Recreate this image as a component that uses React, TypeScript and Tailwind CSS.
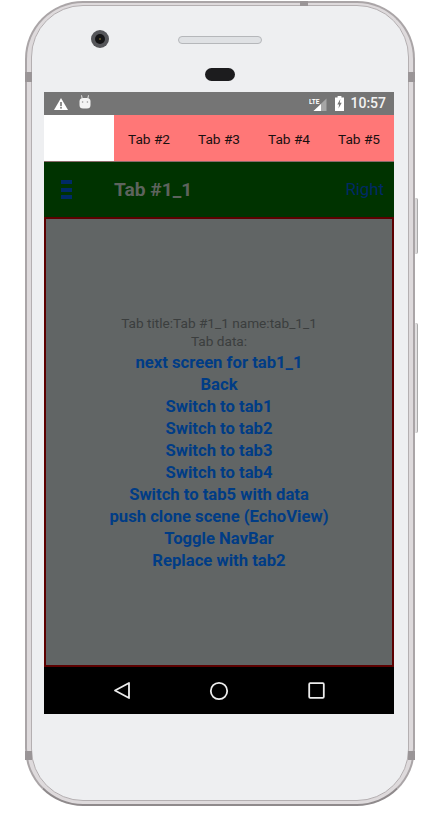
const tabs = ['Tab #2', 'Tab #3', 'Tab #4', 'Tab #5'];
const links = [
  'next screen for tab1_1',
  'Back',
  'Switch to tab1',
  'Switch to tab2',
  'Switch to tab3',
  'Switch to tab4',
  'Switch to tab5 with data',
  'push clone scene (EchoView)',
  'Toggle NavBar',
  'Replace with tab2',
];

function StatusIcons() {
  return (
    <div className="h-[23px] bg-[#757575] flex items-center pl-[10px] pr-[8px] text-white">
      <svg width="14" height="12" viewBox="0 0 14 12">
        <path d="M7 0 14 12H0Z" fill="#fff" />
        <rect x="6.2" y="4" width="1.6" height="4.2" fill="#757575" />
        <rect x="6.2" y="9" width="1.6" height="1.6" fill="#757575" />
      </svg>
      <svg width="12" height="14" viewBox="0 0 12 14" className="ml-[11px] mb-[3px]">
        <path d="M2.5 0.3 3.2 3.5M9.5 0.3 8.8 3.5" stroke="#e6e6e6" strokeWidth="1" />
        <rect x="0.5" y="3" width="11" height="10.5" rx="3.5" fill="#f4f4f4" />
        <circle cx="3.6" cy="7" r="0.8" fill="#999" />
        <circle cx="8.4" cy="7" r="0.8" fill="#999" />
      </svg>
      <div className="flex-1" />
      <svg width="18" height="15" viewBox="0 0 18 15" className="mt-[1px]">
        <path d="M17.5 1.5V14H4.5Z" fill="#a6a6a6" />
        <path d="M12 7V14H4.5Z" fill="#fff" />
        <text x="0" y="6.5" fontSize="6.5" fontFamily="Roboto, sans-serif" fontWeight="700" fill="#fff">LTE</text>
      </svg>
      <svg width="9" height="15" viewBox="0 0 9 15" className="ml-[8px]">
        <path d="M2.6 0H6.4V1.5H9V15H0V1.5H2.6Z" fill="#fff" />
        <path d="M5.3 3 2.3 8.6H4.1L3.5 12.5 6.7 6.8H4.8Z" fill="#757575" />
      </svg>
      <span className="ml-[6px] text-[14px] font-medium text-[#f2f2f2]">10:57</span>
    </div>
  );
}

function BottomNav() {
  return (
    <div className="h-[47px] bg-black flex items-center pl-[69px]">
      <svg width="18" height="19" viewBox="0 0 18 19">
        <path d="M16 2 2 9.5 16 17Z" fill="none" stroke="#ececec" strokeWidth="1.8" strokeLinejoin="round" />
      </svg>
      <svg width="20" height="20" viewBox="0 0 20 20" className="ml-[78px]">
        <circle cx="10" cy="10" r="8.2" fill="none" stroke="#ececec" strokeWidth="1.8" />
      </svg>
      <svg width="17" height="17" viewBox="0 0 17 17" className="ml-[79px]">
        <rect x="1.2" y="1.2" width="14.6" height="14.6" rx="1" fill="none" stroke="#ececec" strokeWidth="1.8" />
      </svg>
    </div>
  );
}

export default function App() {
  return (
    <div className="w-[442px] h-[818px] bg-white pl-[25px] pt-[1px] font-['Roboto',sans-serif]">
      <div className="relative w-[390px] h-[805px] rounded-[58px] border-[2px] border-[#aaa5a7] border-b-[#8f8a8c] bg-[#dedadc] pt-[2px] px-[4px] pb-[3px]">
        {/* side buttons */}
        <div className="absolute right-[-5px] top-[195px] w-[3px] h-[56px] rounded-r-[2px] bg-[#dcdadb] border-r border-[#aaa]" />
        <div className="absolute right-[-5px] top-[320px] w-[3px] h-[110px] rounded-r-[2px] bg-[#e2e0e1] border-r border-[#aaa]" />

        {/* antenna bands */}
        <div className="absolute left-[-2px] top-[69px] w-[7px] h-[10px] bg-[#9a9597]" />
        <div className="absolute right-[-2px] top-[69px] w-[7px] h-[10px] bg-[#9a9597]" />
        <div className="absolute left-[-2px] bottom-[44px] w-[7px] h-[9px] bg-[#9a9597]" />
        <div className="absolute right-[-2px] bottom-[44px] w-[7px] h-[9px] bg-[#9a9597]" />
        <div className="absolute left-[273px] top-[-2px] w-[8px] h-[5px] bg-[#9a9597]" />

        <div className="h-full rounded-[52px] border border-[#b4afb1] bg-[#eeeff1] px-[12px]">
          {/* top bezel */}
          <div className="relative h-[86px]">
            <div className="absolute left-[47px] top-[24px] w-[18px] h-[18px] rounded-full bg-[#55565a] flex items-center justify-center">
              <div className="w-[10px] h-[10px] rounded-full bg-[#141416] flex items-center justify-center">
                <div className="w-[2px] h-[2px] rounded-full bg-[#6b5f30]" />
              </div>
            </div>
            <div className="absolute left-[134px] top-[30px] w-[84px] h-[8px] rounded-full bg-[#dfe1e4] border border-[#b5b7ba]" />
            <div className="absolute left-[161px] top-[62px] w-[30px] h-[13px] rounded-full bg-[#1c1c1e]" />
          </div>

          <div className="w-[350px]">
            <StatusIcons />

            <div className="h-[47px] flex border-b border-[#8a6a6a]">
              <div className="w-[70px] bg-white" />
              {tabs.map((t) => (
                <div key={t} className="w-[70px] bg-[#ff7777] flex items-center justify-center pt-[2px] text-[13.7px] text-[#1a1010]">{t}</div>
              ))}
            </div>

            <div className="h-[55px] bg-[#003300] flex items-center pl-[17px] pr-[10px]">
              <div className="w-[11px] flex flex-col gap-[3.5px]">
                <div className="h-[4px] bg-[#002a66]" />
                <div className="h-[4px] bg-[#002a66]" />
                <div className="h-[4px] bg-[#002a66]" />
              </div>
              <div className="ml-[42px] pt-[1px] text-[19.2px] font-bold text-[#5d635d]">Tab #1_1</div>
              <div className="flex-1" />
              <div className="pt-[1px] text-[16.8px] text-[#002a66]">Right</div>
            </div>

            <div className="h-[450px] bg-[#616565] border-[2px] border-[#5c0000] pt-[2px] flex flex-col items-center justify-center text-center">
              <div className="text-[13.65px] leading-[18px] text-[#3b3e3e]">Tab title:Tab #1_1 name:tab_1_1</div>
              <div className="text-[13.65px] leading-[18px] text-[#3b3e3e]">Tab data:</div>
              <div className="mt-[2px] flex flex-col items-center">
                {links.map((l) => (
                  <div key={l} className="text-[16.65px] leading-[22px] font-bold text-[#003c85]">{l}</div>
                ))}
              </div>
            </div>

            <BottomNav />
          </div>
        </div>
      </div>
    </div>
  );
}
